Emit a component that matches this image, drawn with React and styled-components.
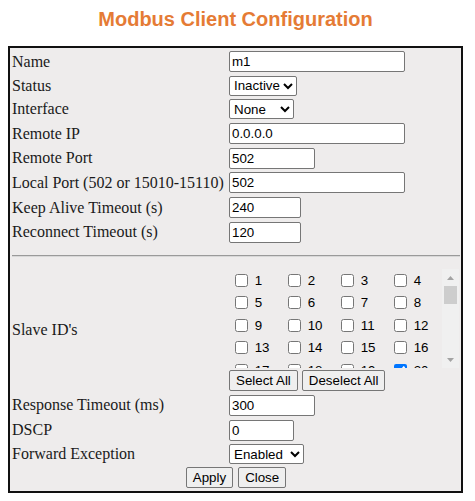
import styled, { createGlobalStyle } from "styled-components"
import { useState } from "react"

const GlobalStyle = createGlobalStyle`
  body {
    margin: 8px;
    background: #fff;
    font-family: "Liberation Serif", "Times New Roman", serif;
  }
`

const SLAVE_IDS = Array.from({ length: 64 }, (_, i) => i + 1)
const LIST_HEIGHT = 99
const ROW_HEIGHT = 22.5
const ARROW_SIZE = 17

function App() {
  const [checked, setChecked] = useState({ 20: true })

  const toggle = (id) => setChecked((prev) => ({ ...prev, [id]: !prev[id] }))
  const setAll = (value) =>
    setChecked(Object.fromEntries(SLAVE_IDS.map((id) => [id, value])))

  return (
    <>
      <GlobalStyle />
      <Page>
        <Title>Modbus Client Configuration</Title>
        <Panel>
          <Row>
            <Label>Name</Label>
            <TextInput $w={176} defaultValue='m1' />
          </Row>
          <Row>
            <Label>Status</Label>
            <Select $w={68} defaultValue='inactive'>
              <option value='inactive'>Inactive</option>
              <option value='active'>Active</option>
            </Select>
          </Row>
          <Row>
            <Label>Interface</Label>
            <Select $w={65} defaultValue='none'>
              <option value='none'>None</option>
              <option value='eth0'>eth0</option>
            </Select>
          </Row>
          <Row>
            <Label>Remote IP</Label>
            <TextInput $w={176} defaultValue='0.0.0.0' />
          </Row>
          <Row>
            <Label>Remote Port</Label>
            <TextInput $w={86} defaultValue='502' />
          </Row>
          <Row>
            <Label>Local Port (502 or 15010-15110)</Label>
            <TextInput $w={176} defaultValue='502' />
          </Row>
          <Row>
            <Label>Keep Alive Timeout (s)</Label>
            <TextInput $w={72} defaultValue='240' />
          </Row>
          <Row>
            <Label>Reconnect Timeout (s)</Label>
            <TextInput $w={72} defaultValue='120' />
          </Row>

          <Divider />

          <Row>
            <Label>Slave ID's</Label>
            <div>
              <SlavePicker checked={checked} onToggle={toggle} />
              <ButtonRow>
                <Button onClick={() => setAll(true)}>Select All</Button>
                <Button onClick={() => setAll(false)}>Deselect All</Button>
              </ButtonRow>
            </div>
          </Row>

          <Row>
            <Label>Response Timeout (ms)</Label>
            <TextInput $w={86} defaultValue='300' />
          </Row>
          <Row>
            <Label>DSCP</Label>
            <TextInput $w={65} defaultValue='0' />
          </Row>
          <Row>
            <Label>Forward Exception</Label>
            <Select $w={75} defaultValue='enabled'>
              <option value='enabled'>Enabled</option>
              <option value='disabled'>Disabled</option>
            </Select>
          </Row>

          <Actions>
            <Button>Apply</Button>
            <Button>Close</Button>
          </Actions>
        </Panel>
      </Page>
    </>
  )
}

// checkbox grid with a classic scrollbar drawn beside it
function SlavePicker({ checked, onToggle }) {
  const [scrollTop, setScrollTop] = useState(0)

  const contentHeight = Math.ceil(SLAVE_IDS.length / 4) * ROW_HEIGHT
  const trackHeight = LIST_HEIGHT - ARROW_SIZE * 2
  const thumbHeight = Math.max(
    12,
    Math.round((trackHeight * LIST_HEIGHT) / contentHeight)
  )
  const maxScroll = contentHeight - LIST_HEIGHT
  const thumbTop = maxScroll
    ? ((trackHeight - thumbHeight) * scrollTop) / maxScroll
    : 0

  return (
    <SlaveBox>
      <SlaveList onScroll={(e) => setScrollTop(e.currentTarget.scrollTop)}>
        {SLAVE_IDS.map((id) => (
          <SlaveItem key={id}>
            <input
              type='checkbox'
              checked={!!checked[id]}
              onChange={() => onToggle(id)}
            />{" "}
            {id}
          </SlaveItem>
        ))}
      </SlaveList>
      <ScrollBar>
        <ScrollArrow>
          <svg width='7' height='4' viewBox='0 0 7 4'>
            <polygon points='3.5,0 7,4 0,4' fill='#a3a3a3' />
          </svg>
        </ScrollArrow>
        <ScrollTrack>
          <ScrollThumb style={{ top: thumbTop, height: thumbHeight }} />
        </ScrollTrack>
        <ScrollArrow>
          <svg width='7' height='4' viewBox='0 0 7 4'>
            <polygon points='0,0 7,0 3.5,4' fill='#a3a3a3' />
          </svg>
        </ScrollArrow>
      </ScrollBar>
    </SlaveBox>
  )
}

const Page = styled.div`
  width: 455px;
`

const Title = styled.h2`
  margin: 0 0 15px;
  text-align: center;
  font-family: "Liberation Sans", Arial, sans-serif;
  font-size: 20px;
  font-weight: bold;
  color: #e57b35;
  line-height: 23px;
`

const Panel = styled.div`
  border: 2px solid #111;
  background: #eeecec;
  padding: 3px 1px 3px 2px;
  display: flex;
  flex-direction: column;
  gap: 3.7px;
`

const Row = styled.div`
  display: grid;
  grid-template-columns: 217px auto;
  align-items: center;
`

const Label = styled.span`
  font-size: 16px;
  color: #1a1a1a;
  white-space: nowrap;
`

const fieldFont = `
  font-family: "Liberation Sans", Arial, sans-serif;
  font-size: 13.33px;
  color: #000;
  box-sizing: border-box;
`

const TextInput = styled.input`
  ${fieldFont}
  width: ${(props) => props.$w}px;
  height: 21px;
  padding: 1px 2px;
  border: 1px solid #767676;
  border-radius: 2px;
  background: #fff;
`

const Select = styled.select`
  ${fieldFont}
  width: ${(props) => props.$w}px;
  height: 20px;
  border: 1px solid #767676;
  border-radius: 2px;
  background: #fff;
`

const Divider = styled.hr`
  margin: 8px 0 9px;
  border: none;
  border-top: 1px solid #9a9a9a;
  border-bottom: 1px solid #d8d8d8;
`

const SlaveBox = styled.div`
  display: flex;
  width: 230px;
  height: ${LIST_HEIGHT}px;
`

const SlaveList = styled.div`
  flex: 1;
  overflow-y: auto;
  scrollbar-width: none;
  display: grid;
  grid-template-columns: repeat(4, 53px);
  grid-auto-rows: ${ROW_HEIGHT}px;
  align-items: center;
  padding-left: 2px;
  box-sizing: border-box;

  &::-webkit-scrollbar {
    display: none;
  }
`

const SlaveItem = styled.label`
  ${fieldFont}
  white-space: nowrap;

  input {
    width: 13px;
    height: 13px;
    margin: 3px 3px 3px 4px;
    vertical-align: -2px;
  }
`

const ScrollBar = styled.div`
  width: 17px;
  display: flex;
  flex-direction: column;
  background: #f0f0f0;
`

const ScrollArrow = styled.div`
  height: ${ARROW_SIZE}px;
  display: flex;
  align-items: center;
  justify-content: center;
`

const ScrollTrack = styled.div`
  flex: 1;
  position: relative;
`

const ScrollThumb = styled.div`
  position: absolute;
  left: 2px;
  right: 2px;
  background: #cdcdcd;
`

const ButtonRow = styled.div`
  display: flex;
  gap: 4px;
  margin-top: 2px;
`

const Button = styled.button`
  ${fieldFont}
  height: 21px;
  padding: 1px 6px;
  border: 1px solid #767676;
  border-radius: 2px;
  background: #efefef;
`

const Actions = styled.div`
  display: flex;
  justify-content: center;
  gap: 5px;
  margin-top: -1px;
`

export default App
